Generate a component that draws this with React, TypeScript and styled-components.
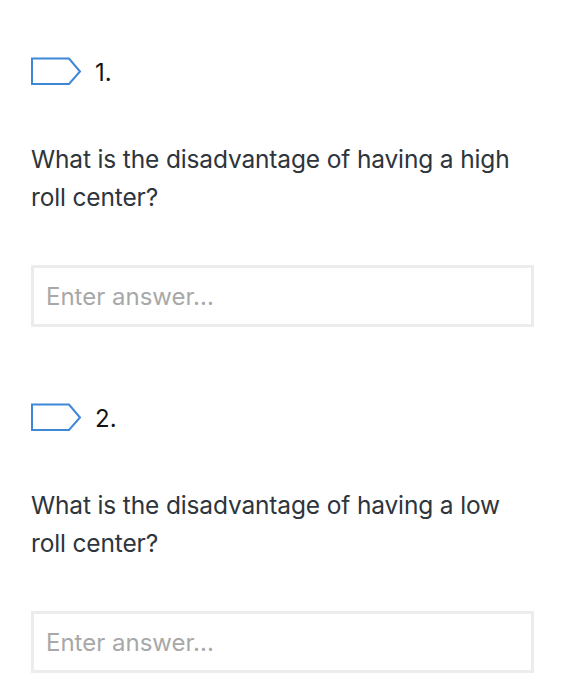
import React from "react";
import styled, { createGlobalStyle } from "styled-components";

const Global = createGlobalStyle`
  html, body { margin: 0; padding: 0; background: #ffffff; }
  body { font-family: Inter, "Noto Sans", sans-serif; -webkit-font-smoothing: antialiased; }
`;

const Page = styled.div`
  display: flex;
  flex-direction: column;
  padding: 57px 32px 0 31px;
`;

const Item = styled.section`
  display: flex;
  flex-direction: column;
  & + & { margin-top: 76px; }
`;

const Header = styled.div`
  display: flex;
  align-items: center;
  gap: 13px;
  height: 29px;
  margin-left: -1px;
`;

const Number = styled.span`
  font-size: 24px;
  line-height: 29px;
  color: #151515;
  padding-top: 1px;
`;

const Question = styled.p`
  margin: 54px 0 0;
  font-size: 24.5px;
  line-height: 38px;
  color: #2e353c;
  letter-spacing: -0.15px;
`;

const Answer = styled.input`
  box-sizing: border-box;
  margin-top: 49px;
  width: 100%;
  height: 62px;
  border: 3px solid #ececec;
  border-radius: 0;
  padding: 0 12px;
  font-family: Inter, "Noto Sans", sans-serif;
  font-size: 24px;
  color: #2e353c;
  outline: none;
  background: #fff;
  &::placeholder { color: #a8a8a8; }
`;

const Tag = () => (
  <svg width="52" height="29" viewBox="0 0 52 29" aria-hidden>
    <path
      d="M2 1.5 H39 L50 14.5 L39 27 H2 Z"
      fill="none"
      stroke="#3f87d7"
      strokeWidth="2"
      strokeLinejoin="miter"
    />
  </svg>
);

const questions = [
  "What is the disadvantage of having a high roll center?",
  "What is the disadvantage of having a low roll center?",
];

export default function App() {
  return (
    <>
      <Global />
      <Page>
        {questions.map((q, i) => (
          <Item key={i}>
            <Header>
              <Tag />
              <Number>{i + 1}.</Number>
            </Header>
            <Question>{q}</Question>
            <Answer placeholder="Enter answer..." />
          </Item>
        ))}
      </Page>
    </>
  );
}
